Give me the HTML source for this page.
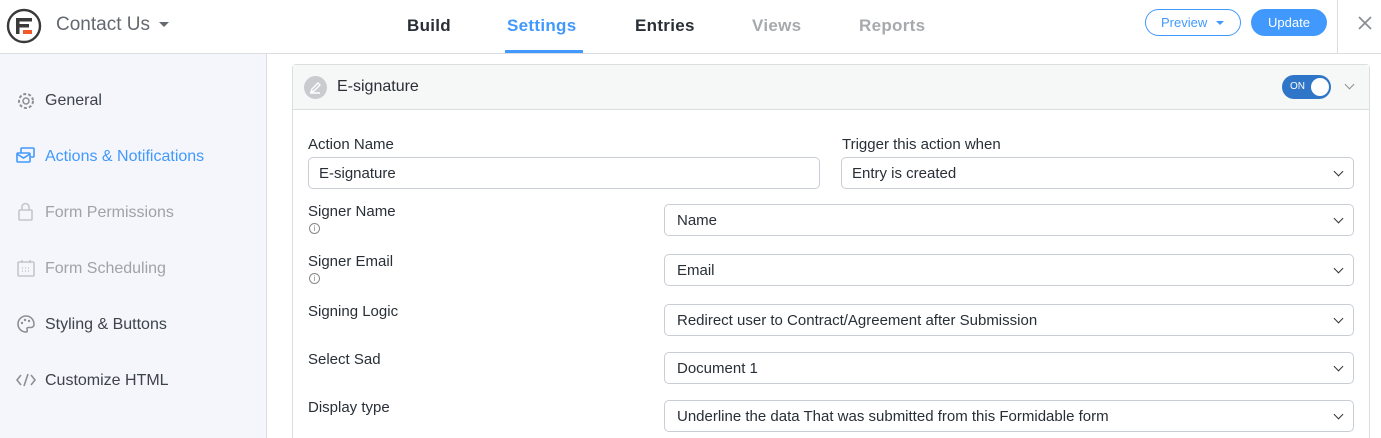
<!DOCTYPE html>
<html style="width:1381px;height:438px;overflow:hidden"><head><meta charset="utf-8"><style>
*{box-sizing:border-box;margin:0;padding:0}
body{width:1381px;height:438px;overflow:hidden;font-family:"Liberation Sans",sans-serif;background:#fff;position:relative;color:#282f36}
.hdr{position:absolute;left:0;top:0;width:1381px;height:54px;border-bottom:1px solid #dcdde1;background:#fff}
.abs{position:absolute}
.tab{position:absolute;top:16px;font-size:17px;font-weight:bold;letter-spacing:.3px;color:#282f36}
.side{position:absolute;left:0;top:54px;width:267px;height:384px;background:#f5f6fb;border-right:1px solid #dcdde1}
.si{position:absolute;left:45px;font-size:16px;color:#3c434a}
.ic{position:absolute;left:16px}
.card{position:absolute;left:292px;top:64px;width:1078px;height:374px;border:1px solid #dcdde1;border-bottom:none;border-radius:4px 4px 0 0;background:#fff}
.ch{height:45px;background:#f6f7f7;border-bottom:1px solid #dcdde1;position:relative}
.lbl{position:absolute;font-size:15px;color:#282f36}
.inp{position:absolute;height:32px;border:1px solid #c9ced6;border-radius:5px;font-size:15px;padding:7px 0 0 12px;color:#282f36;background:#fff}
.sel::after{content:"";position:absolute;right:11px;top:10px;width:6px;height:6px;border-right:1.6px solid #333;border-bottom:1.6px solid #333;transform:rotate(45deg)}
.info{position:absolute;width:11px;height:11px;border:1px solid #888;border-radius:50%;font-size:8px;text-align:center;line-height:9px;color:#888}
</style></head><body>
<div class="hdr">
  <svg class="abs" style="left:6px;top:8px" width="36" height="36" viewBox="0 0 36 36"><circle cx="18" cy="18" r="16" fill="none" stroke="#3a3a3a" stroke-width="2.4"/><rect x="10" y="10" width="16" height="3.5" fill="#3a3a3a"/><rect x="10" y="16" width="13" height="3.5" fill="#3a3a3a"/><rect x="10" y="10" width="3.5" height="16" fill="#3a3a3a"/><rect x="17" y="22" width="9" height="4" fill="#f05a28"/></svg>
  <div class="abs" style="left:56px;top:14px;font-size:19px;color:#646970">Contact Us</div>
  <div class="abs" style="left:159px;top:22px;border-left:5px solid transparent;border-right:5px solid transparent;border-top:5px solid #646970"></div>
  <div class="tab" style="left:407px">Build</div>
  <div class="tab" style="left:507px;color:#4199fd">Settings</div>
  <div class="abs" style="left:505px;top:50px;width:78px;height:3px;background:#4199fd"></div>
  <div class="tab" style="left:635px">Entries</div>
  <div class="tab" style="left:752px;color:#a7aaad">Views</div>
  <div class="tab" style="left:859px;color:#a7aaad">Reports</div>
  <div class="abs" style="left:1145px;top:9px;width:96px;height:27px;border:1px solid #4199fd;border-radius:14px;color:#4199fd;font-size:13px;padding:5px 0 0 15px">Preview</div>
  <div class="abs" style="left:1216px;top:21px;border-left:4px solid transparent;border-right:4px solid transparent;border-top:4px solid #4199fd"></div>
  <div class="abs" style="left:1251px;top:9px;width:76px;height:27px;background:#4199fd;border-radius:14px;color:#fff;font-size:13px;text-align:center;padding-top:6px">Update</div>
  <div class="abs" style="left:1337px;top:0;width:1px;height:53px;background:#dcdde1"></div>
  <svg class="abs" style="left:1357px;top:15px" width="16" height="16"><path d="M2 2L14 14M14 2L2 14" stroke="#8c8f94" stroke-width="1.8"/></svg>
</div>
<div class="side">
  <svg class="ic" style="top:37px" width="20" height="20" viewBox="0 0 20 20"><circle cx="10" cy="10" r="3" fill="none" stroke="#8c8f94" stroke-width="1.5"/><circle cx="10" cy="10" r="7" fill="none" stroke="#8c8f94" stroke-width="2" stroke-dasharray="3 2"/></svg>
  <div class="si" style="top:38px">General</div>
  <svg class="ic" style="top:92px" width="20" height="18" viewBox="0 0 20 18"><rect x="5" y="2" width="13" height="9" rx="1" fill="none" stroke="#4199fd" stroke-width="1.6"/><rect x="1" y="7" width="13" height="9" rx="1" fill="#f5f6fb" stroke="#4199fd" stroke-width="1.6"/><path d="M1 8l6.5 4 6.5-4" fill="none" stroke="#4199fd" stroke-width="1.6"/></svg>
  <div class="si" style="top:94px;color:#4199fd">Actions &amp; Notifications</div>
  <svg class="ic" style="top:148px" width="20" height="20" viewBox="0 0 20 20"><rect x="3" y="8" width="13" height="10" rx="1" fill="none" stroke="#c4c6ca" stroke-width="1.6"/><path d="M6 8V5a3.5 3.5 0 017 0v3" fill="none" stroke="#c4c6ca" stroke-width="1.6"/></svg>
  <div class="si" style="top:150px;color:#9ea3a8">Form Permissions</div>
  <svg class="ic" style="top:204px" width="20" height="20" viewBox="0 0 20 20"><rect x="2" y="4" width="16" height="14" rx="1" fill="none" stroke="#c4c6ca" stroke-width="1.6"/><path d="M6 2v3M14 2v3" stroke="#c4c6ca" stroke-width="1.6"/><path d="M6 10h1M9 10h1M12 10h1M6 13h1M9 13h1M12 13h1" stroke="#c4c6ca" stroke-width="1.5"/></svg>
  <div class="si" style="top:206px;color:#9ea3a8">Form Scheduling</div>
  <svg class="ic" style="top:260px" width="20" height="20" viewBox="0 0 20 20"><path d="M10 2a8 8 0 100 16c1.5 0 1.5-1.5 1-2.5s0-2 1.5-2H15a3 3 0 003-3C18 5.5 14.5 2 10 2z" fill="none" stroke="#8c8f94" stroke-width="1.6"/><circle cx="6" cy="9" r="1.2" fill="#8c8f94"/><circle cx="9" cy="6" r="1.2" fill="#8c8f94"/><circle cx="13" cy="7" r="1.2" fill="#8c8f94"/></svg>
  <div class="si" style="top:262px">Styling &amp; Buttons</div>
  <svg class="ic" style="top:318px" width="20" height="16" viewBox="0 0 20 16"><path d="M5 3L1 8l4 5M15 3l4 5-4 5M12 2L8 14" fill="none" stroke="#8c8f94" stroke-width="1.6"/></svg>
  <div class="si" style="top:318px">Customize HTML</div>
</div>
<div class="card">
  <div class="ch">
    <div class="abs" style="left:11px;top:11px;width:23px;height:23px;border-radius:50%;background:#c9cbcf"></div>
    <svg class="abs" style="left:15px;top:15px" width="15" height="15"><path d="M3 12l1-3 6-6 2 2-6 6z M2 13h10" fill="none" stroke="#fff" stroke-width="1.4"/></svg>
    <div class="abs" style="left:44px;top:13px;font-size:16px;color:#282f36">E-signature</div>
    <div class="abs" style="left:989px;top:10px;width:49px;height:24px;border-radius:12px;background:#2f76c8"></div>
    <div class="abs" style="left:997px;top:16px;font-size:10px;color:#fff">ON</div>
    <div class="abs" style="left:1018px;top:13px;width:18px;height:18px;border-radius:50%;background:#fff"></div>
    <div class="abs" style="left:1053px;top:16px;width:7px;height:7px;border-right:1.6px solid #8c8f94;border-bottom:1.6px solid #8c8f94;transform:rotate(45deg)"></div>
  </div>
</div>
<div class="lbl" style="left:308px;top:136px">Action Name</div>
<div class="inp" style="left:308px;top:157px;width:512px;padding-left:10px">E-signature</div>
<div class="lbl" style="left:842px;top:136px">Trigger this action when</div>
<div class="inp sel" style="left:841px;top:157px;width:513px;padding-left:10px">Entry is created</div>
<div class="lbl" style="left:308px;top:203px">Signer Name</div><div class="info" style="left:309px;top:223px">i</div>
<div class="inp sel" style="left:664px;top:204px;width:690px">Name</div>
<div class="lbl" style="left:308px;top:253px">Signer Email</div><div class="info" style="left:309px;top:273px">i</div>
<div class="inp sel" style="left:664px;top:254px;width:690px">Email</div>
<div class="lbl" style="left:308px;top:303px">Signing Logic</div>
<div class="inp sel" style="left:664px;top:304px;width:690px">Redirect user to Contract/Agreement after Submission</div>
<div class="lbl" style="left:308px;top:351px">Select Sad</div>
<div class="inp sel" style="left:664px;top:352px;width:690px">Document 1</div>
<div class="lbl" style="left:308px;top:399px">Display type</div>
<div class="inp sel" style="left:664px;top:400px;width:690px">Underline the data That was submitted from this Formidable form</div>
</body></html>
